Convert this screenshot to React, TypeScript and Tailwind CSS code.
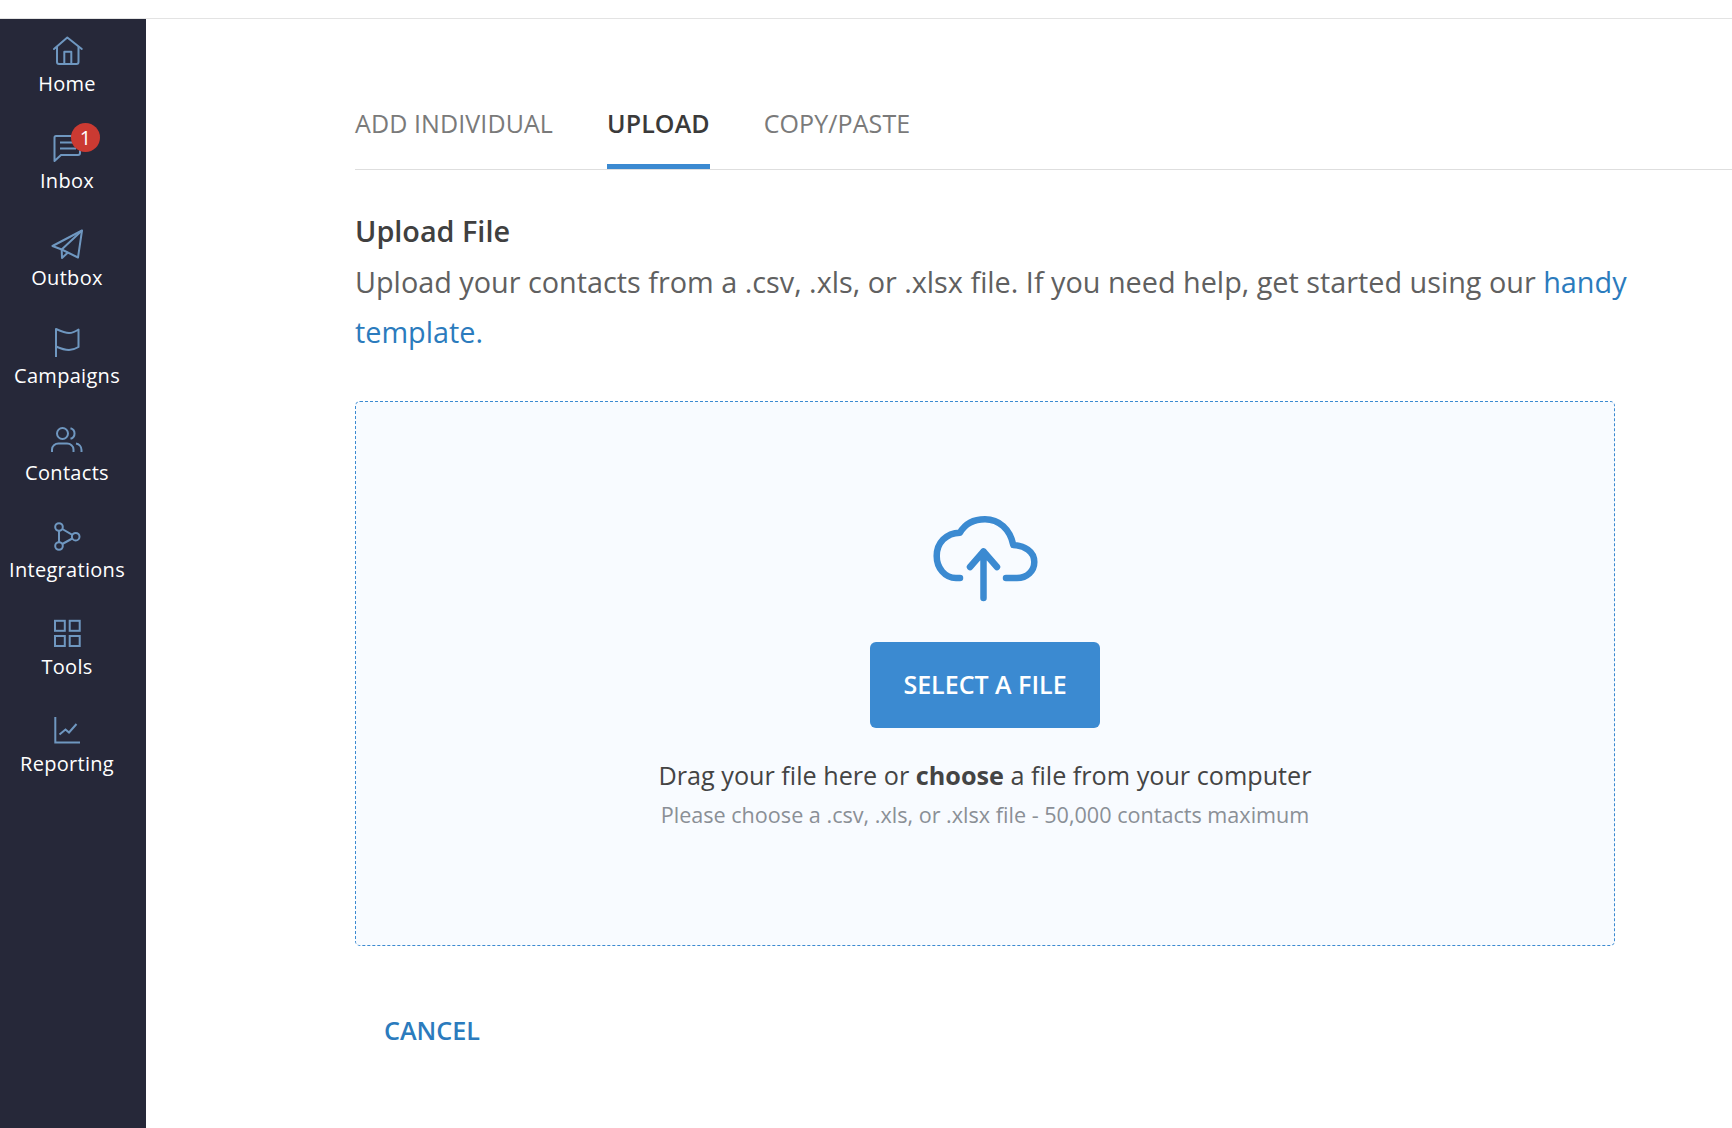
import { ReactNode } from 'react'

const iconClass = 'w-[34px] h-[34px] text-[#6f97c0]'

function HomeIcon() {
  return (
    <svg viewBox="0 0 34 34" fill="none" stroke="currentColor" strokeWidth="2" strokeLinejoin="round" className={iconClass}>
      <path d="M4 15 17.300 3.500 31.800 15" strokeLinecap="round" />
      <path d="M7 12.500v15.500a2 2 0 0 0 2 2h17.500a2 2 0 0 0 2-2V12.500" />
      <path d="M14.300 30V17.700h7V30" />
    </svg>
  )
}

function InboxIcon() {
  return (
    <svg viewBox="0 0 34 34" fill="none" stroke="currentColor" strokeWidth="2" strokeLinejoin="round" className={iconClass}>
      <path d="M6 5h22a2 2 0 0 1 2 2v15a2 2 0 0 1-2 2H11l-6.500 6V6.500A1.500 1.500 0 0 1 6 5z" />
      <path d="M10 11.500h16M10 17.500h16" />
    </svg>
  )
}

function OutboxIcon() {
  return (
    <svg viewBox="0 0 34 34" fill="none" stroke="currentColor" strokeWidth="2" strokeLinejoin="round" className={iconClass}>
      <path d="M32 2.500 2.500 18l9.200 3.500L28 29.500z" />
      <path d="M32 2.500 11.700 21.500 12 30l6.300-5.800" />
    </svg>
  )
}

function FlagIcon() {
  return (
    <svg viewBox="0 0 34 34" fill="none" stroke="currentColor" strokeWidth="2" strokeLinejoin="round" className={iconClass}>
      <path d="M6 31V3c4.500 2 9 4 13 4 3.500 0 6.500-1.500 9.500-3.500V21c-3 1.800-6 3-9.500 3-4 0-8.500-1.500-13-3.500" />
    </svg>
  )
}

function ContactsIcon() {
  return (
    <svg viewBox="0 0 34 34" fill="none" stroke="currentColor" strokeWidth="2" strokeLinecap="butt" className={iconClass}>
      <circle cx="12.500" cy="10.500" r="5.500" />
      <path d="M20.500 5.200a5.500 5.500 0 0 1 0 10.600" />
      <path d="M2 29v-2.500c0-3.500 3-6 6.500-6h8.500c3.500 0 6.500 2.500 6.500 6V29" />
      <path d="M26 20.500c3 .5 5.500 3 5.500 6.500v2" />
    </svg>
  )
}

function IntegrationsIcon() {
  return (
    <svg viewBox="0 0 34 34" fill="none" stroke="currentColor" strokeWidth="2" className={iconClass}>
      <circle cx="9" cy="7" r="3.800" />
      <circle cx="9" cy="26" r="3.800" />
      <circle cx="25.700" cy="16.700" r="3.800" />
      <path d="M9 10.800v11.400M12.300 9l10 5.800M12.300 24l10-5.500" />
    </svg>
  )
}

function ToolsIcon() {
  return (
    <svg viewBox="0 0 34 34" fill="none" stroke="currentColor" strokeWidth="2" className={iconClass}>
      <rect x="5" y="3.800" width="9.800" height="10" />
      <rect x="19.700" y="3.800" width="10" height="10" />
      <rect x="5" y="19" width="9.800" height="10" />
      <rect x="19.700" y="19" width="10" height="10" />
    </svg>
  )
}

function ReportingIcon() {
  return (
    <svg viewBox="0 0 34 34" fill="none" stroke="currentColor" strokeWidth="2" className={iconClass}>
      <path d="M5.300 3v25.500H30" />
      <path d="M9.500 20.500l6-5 3.500 3 7.500-8.500" />
    </svg>
  )
}

function NavItem({ icon, label, badge }: { icon: ReactNode; label: string; badge?: string }) {
  return (
    <div className="h-[97.2px] flex flex-col items-center text-white">
      <div className="relative h-[34px]">
        {icon}
        {badge && (
          <span className="absolute left-[21px] top-[-8px] w-[29px] h-[29px] rounded-full bg-[#cb3a32] text-[20px] font-medium flex items-center justify-center">
            {badge}
          </span>
        )}
      </div>
      <span className="mt-[2px] text-[20px] leading-[28px] font-medium tracking-[0.3px]">{label}</span>
    </div>
  )
}

export default function App() {
  return (
    <div className="w-[1732px] h-[1128px] bg-white overflow-hidden flex flex-col font-['Open_Sans',sans-serif]">
      <div className="h-[19px] shrink-0 border-b border-[#e3e3e3]" />
      <div className="flex flex-1 min-h-0">
        <nav className="w-[146px] shrink-0 bg-[#262839] pt-[15px] pr-[12px]">
          <NavItem icon={<HomeIcon />} label="Home" />
          <NavItem icon={<InboxIcon />} label="Inbox" badge="1" />
          <NavItem icon={<OutboxIcon />} label="Outbox" />
          <NavItem icon={<FlagIcon />} label="Campaigns" />
          <NavItem icon={<ContactsIcon />} label="Contacts" />
          <NavItem icon={<IntegrationsIcon />} label="Integrations" />
          <NavItem icon={<ToolsIcon />} label="Tools" />
          <NavItem icon={<ReportingIcon />} label="Reporting" />
        </nav>

        <main className="flex-1 min-w-0 pl-[209px]">
          <div className="h-[151px] flex items-end gap-[54px] border-b border-[#dedede]">
            <div className="pb-[29px] text-[25px] leading-[34px] tracking-[0.1px] text-[#7a7a7a]">ADD INDIVIDUAL</div>
            <div className="relative pb-[29px] text-[25px] leading-[34px] font-semibold tracking-[0.1px] text-[#3a3a3a]">
              UPLOAD
              <span className="absolute left-0 right-0 bottom-0 h-[5px] bg-[#3b8ad1]" />
            </div>
            <div className="pb-[29px] text-[25px] leading-[34px] tracking-[0.1px] text-[#7a7a7a]">COPY/PASTE</div>
          </div>

          <h2 className="mt-[40.500px] text-[28.800px] leading-[40px] font-semibold text-[#404040]">Upload File</h2>
          <p className="mt-[6.500px] w-[1290px] text-[28.800px] leading-[50px] text-[#606060]">
            Upload your contacts from a .csv, .xls, or .xlsx file. If you need help, get started using our{' '}
            <span className="text-[#2b7bbd]">handy template.</span>
          </p>

          <div className="mt-[43.500px] w-[1260px] h-[545px] rounded-[5px] border border-dashed border-[#3b8ad1] bg-[#f8fbff] flex flex-col items-center">
            <svg viewBox="0 0 108 88" fill="none" stroke="#3b8ad1" strokeWidth="6.500" strokeLinecap="round" strokeLinejoin="round" className="mt-[112px] w-[108px] h-[88px]">
              <path d="M29 64H25C14 64 5.700 54 5.700 42 5.700 29 15 19 29 18.700 34 10 43 5.300 54 5.300 68 5.300 79 15 82.300 31 93 31.500 103.300 37 103.300 48 103.300 57 96 64 86 64H75" />
              <path d="M52.500 84V37.500M39 53l13.500-15.500L66 53" />
            </svg>
            <button className="mt-[40px] w-[230px] h-[86px] rounded-[6px] bg-[#3b8ad1] text-white text-[25px] font-semibold">
              SELECT A FILE
            </button>
            <p className="mt-[28px] text-[25.200px] leading-[38px] text-[#444444]">
              Drag your file here or <strong className="font-bold">choose</strong> a file from your computer
            </p>
            <p className="mt-[4px] text-[21.600px] leading-[34px] text-[#8a8f96]">
              Please choose a .csv, .xls, or .xlsx file - 50,000 contacts maximum
            </p>
          </div>

          <div className="mt-[67px] pl-[29px] text-[25.200px] leading-[34px] font-semibold text-[#2b7bbd]">CANCEL</div>
        </main>
      </div>
    </div>
  )
}
